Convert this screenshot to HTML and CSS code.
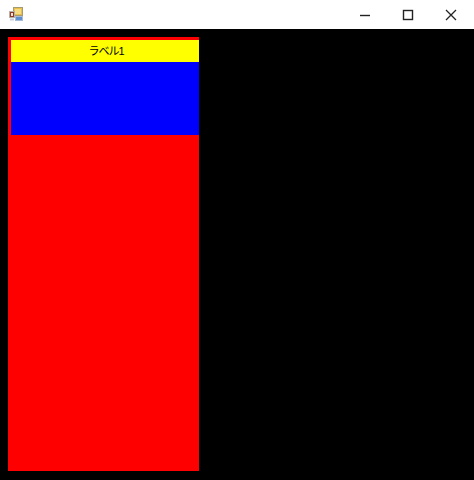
FILE: index.html
```html
<!DOCTYPE html>
<html lang="ja">

<head>
    <meta charset="UTF-8">
    <title>Form1</title>
    <link rel="stylesheet" href="styles.css">
</head>

<body>

    <div class="titlebar">
        <svg class="app-icon" width="14" height="14" viewBox="0 0 14 14">
            <rect x="4.5" y="0.5" width="9" height="8" fill="#e8c04a" stroke="#a89a70" />
            <rect x="6" y="2" width="6" height="5" fill="#f6dc80" />
            <rect x="0.5" y="4.5" width="5" height="6" fill="#8c3a2c" stroke="#b8b0a8" />
            <rect x="2" y="6" width="2" height="3" fill="#f0e0d0" />
            <rect x="6.5" y="9.5" width="7" height="4" fill="#5f8fd0" stroke="#a8bcd8" />
            <rect x="1" y="11.5" width="4" height="2" fill="#c4ccd8" />
        </svg>
        <div class="window-buttons">
            <svg width="12" height="12" viewBox="0 0 12 12">
                <path d="M1 6.5H11" stroke="#222" stroke-width="1.4" fill="none" />
            </svg>
            <svg width="12" height="12" viewBox="0 0 12 12">
                <rect x="1.5" y="1.5" width="9" height="9" stroke="#222" stroke-width="1.4" fill="none" />
            </svg>
            <svg width="12" height="12" viewBox="0 0 12 12">
                <path d="M1 1L11 11M11 1L1 11" stroke="#222" stroke-width="1.3" fill="none" />
            </svg>
        </div>
    </div>

    <div class="client">
        <div class="panel">
            <div class="label">ラベル1</div>
            <div class="blue-box"></div>
        </div>
    </div>

</body>

</html>
```

FILE: styles.css
```css
html,
body {
    margin: 0;
    height: 100%;
}

body {
    width: 474px;
    height: 480px;
    overflow: hidden;
    display: flex;
    flex-direction: column;
    background-color: black;
}

.titlebar {
    height: 29px;
    flex-shrink: 0;
    display: flex;
    align-items: center;
    justify-content: space-between;
    padding: 0 17px 0 9px;
    background-color: white;
    box-sizing: border-box;
}

.app-icon {
    margin-bottom: 1px;
}

.window-buttons {
    display: flex;
    gap: 31px;
}

.client {
    flex-grow: 1;
    padding: 8px 0 9px 8px;
    background-color: black;
}

.panel {
    width: 188px;
    height: 431px;
    padding: 3px 0 0 3px;
    background-color: #ff0000;
}

.label {
    height: 22px;
    padding-left: 2px;
    line-height: 22px;
    text-align: center;
    font-family: "Liberation Sans", "Noto Sans CJK JP", sans-serif;
    font-size: 11px;
    letter-spacing: -1px;
    color: black;
    background-color: #ffff00;
}

.blue-box {
    height: 73px;
    background-color: #0000ff;
}
```
